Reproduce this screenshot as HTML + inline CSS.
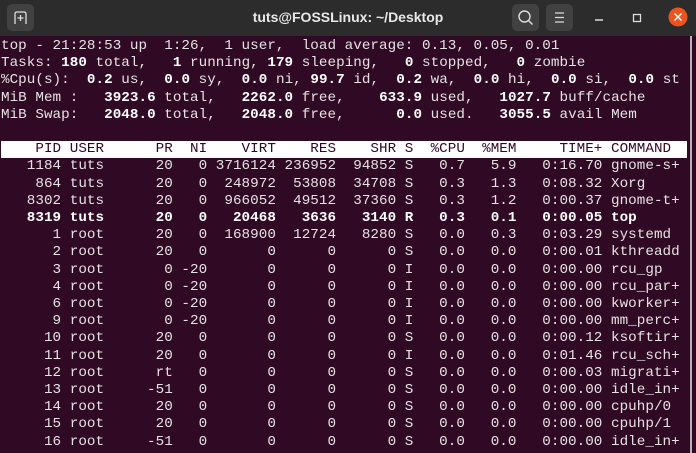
<!DOCTYPE html>
<html><head><meta charset="utf-8"><style>
html,body{margin:0;padding:0;width:696px;height:453px;overflow:hidden;background:#300a24;}
.tb{position:absolute;left:0;top:0;width:696px;height:36px;background:#2c2c2c;}
.title{position:absolute;left:0;width:696px;top:9px;text-align:center;color:#e8e8e8;font:bold 14px "Liberation Sans",sans-serif;}
.btn{position:absolute;top:4px;width:27px;height:27px;background:#414141;border-radius:5px;}
pre{position:absolute;left:1px;top:38px;margin:0;font-family:"Liberation Mono",monospace;font-size:14.25px;letter-spacing:0.04px;line-height:17.2px;color:#e6e2e4;}
b{color:#fff;}
.hd{background:#fff;color:#300a24;display:inline-block;width:686px;}
.sb{position:absolute;left:690px;top:36px;width:2px;height:417px;background:#b8b0b4;}
</style></head><body>
<div class="tb">
 <div class="btn" style="left:7px"><svg width="27" height="27"><path d="M8 20V10q0-2 2-2h7q2 0 2 2v10" fill="none" stroke="#ddd" stroke-width="1.3"/><path d="M13.5 11v6M10.5 14h6" stroke="#ddd" stroke-width="1.3"/></svg></div>
 <div class="title">tuts@FOSSLinux: ~/Desktop</div>
 <div class="btn" style="left:512px"><svg width="27" height="27"><circle cx="12.5" cy="12.5" r="5.5" fill="none" stroke="#ddd" stroke-width="1.4"/><path d="M16.5 16.5l4 4" stroke="#ddd" stroke-width="1.5"/></svg></div>
 <div class="btn" style="left:546px"><svg width="27" height="27"><path d="M9 9h9M9 13.5h9M9 18h9" stroke="#ddd" stroke-width="1.3"/></svg></div>
 <svg style="position:absolute;left:590px;top:0" width="106" height="36"><path d="M5 20h8" stroke="#ddd" stroke-width="1.5"/><rect x="43.5" y="14.5" width="7" height="7" fill="none" stroke="#ddd" stroke-width="1.3"/><circle cx="88" cy="17" r="9.5" fill="#e95420"/><path d="M84.5 13.5l7 7M91.5 13.5l-7 7" stroke="#fff" stroke-width="1.5"/></svg>
</div>
<pre>top - 21:28:53 up  1:26,  1 user,  load average: 0.13, 0.05, 0.01
Tasks: <b>180</b> total,   <b>1</b> running, <b>179</b> sleeping,   <b>0</b> stopped,   <b>0</b> zombie
%Cpu(s):  <b>0.2</b> us,  <b>0.0</b> sy,  <b>0.0</b> ni, <b>99.7</b> id,  <b>0.2</b> wa,  <b>0.0</b> hi,  <b>0.0</b> si,  <b>0.0</b> st
MiB Mem :   <b>3923.6</b> total,   <b>2262.0</b> free,    <b>633.9</b> used,   <b>1027.7</b> buff/cache
MiB Swap:   <b>2048.0</b> total,   <b>2048.0</b> free,      <b>0.0</b> used.   <b>3055.5</b> avail Mem

<span class="hd">    PID USER      PR  NI    VIRT    RES    SHR S  %CPU  %MEM     TIME+ COMMAND</span>
   1184 tuts      20   0 3716124 236952  94852 S   0.7   5.9   0:16.70 gnome-s+
    864 tuts      20   0  248972  53808  34708 S   0.3   1.3   0:08.32 Xorg
   8302 tuts      20   0  966052  49512  37360 S   0.3   1.2   0:00.37 gnome-t+
<b>   8319 tuts      20   0   20468   3636   3140 R   0.3   0.1   0:00.05 top</b>
      1 root      20   0  168900  12724   8280 S   0.0   0.3   0:03.29 systemd
      2 root      20   0       0      0      0 S   0.0   0.0   0:00.01 kthreadd
      3 root       0 -20       0      0      0 I   0.0   0.0   0:00.00 rcu_gp
      4 root       0 -20       0      0      0 I   0.0   0.0   0:00.00 rcu_par+
      6 root       0 -20       0      0      0 I   0.0   0.0   0:00.00 kworker+
      9 root       0 -20       0      0      0 I   0.0   0.0   0:00.00 mm_perc+
     10 root      20   0       0      0      0 S   0.0   0.0   0:00.12 ksoftir+
     11 root      20   0       0      0      0 I   0.0   0.0   0:01.46 rcu_sch+
     12 root      rt   0       0      0      0 S   0.0   0.0   0:00.03 migrati+
     13 root     -51   0       0      0      0 S   0.0   0.0   0:00.00 idle_in+
     14 root      20   0       0      0      0 S   0.0   0.0   0:00.00 cpuhp/0
     15 root      20   0       0      0      0 S   0.0   0.0   0:00.00 cpuhp/1
     16 root     -51   0       0      0      0 S   0.0   0.0   0:00.00 idle_in+</pre>
<div class="sb"></div>
</body></html>
